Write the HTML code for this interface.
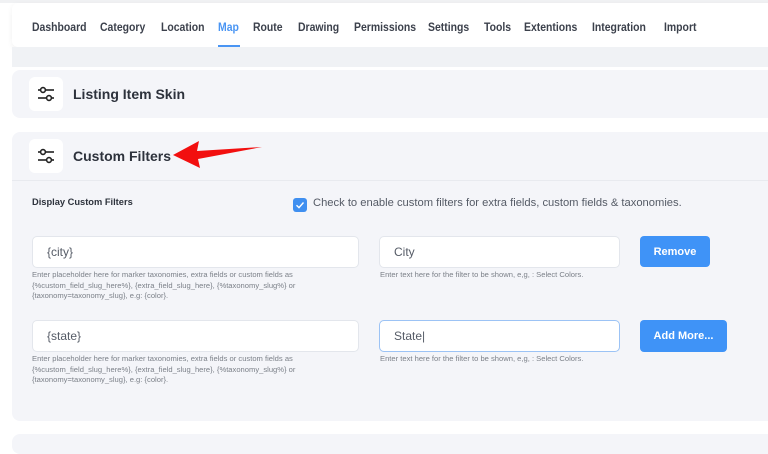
<!DOCTYPE html>
<html><head><meta charset="utf-8"><style>
*{box-sizing:border-box;margin:0;padding:0}
body{width:768px;height:437px;overflow:hidden;background:#fff;font-family:"Liberation Sans",sans-serif;position:relative}
.abs{position:absolute}
.nav{left:12px;top:3px;width:770px;height:44px;background:#fff;border-radius:6px;box-shadow:0 2px 6px rgba(0,0,0,.06)}
.nav span{position:absolute;top:17px;font-size:12px;font-weight:bold;color:#3c414c;white-space:nowrap;transform:scaleX(.87);transform-origin:left}
.band{left:12px;top:47px;width:760px;height:20px;background:#f0f2f5}
.card{background:#f4f5f9;border-radius:8px}
.ico{width:34px;height:34px;background:#fff;border-radius:6px}
.ttl{font-size:14px;font-weight:bold;color:#2d323c}
.inp{background:#fff;border:1px solid #e3e6ec;border-radius:5px;font-size:12px;color:#555b66;padding:0 0 0 14px;display:flex;align-items:center}
.help{font-size:7.6px;line-height:10.5px;color:#7c8189}
.btn{background:#3f93f7;color:#fff;font-size:11px;font-weight:bold;border-radius:4px;display:flex;align-items:center;justify-content:center}
</style></head><body>
<div class="abs" style="left:0;top:0;width:768px;height:3px;background:#f0f1f3"></div>
<div class="abs nav">
<span style="left:20px">Dashboard</span><span style="left:88px">Category</span><span style="left:149px">Location</span><span style="left:206px;color:#4a95f3">Map</span><span style="left:241px">Route</span><span style="left:286px">Drawing</span><span style="left:342px">Permissions</span><span style="left:416px">Settings</span><span style="left:472px">Tools</span><span style="left:512px">Extentions</span><span style="left:580px">Integration</span><span style="left:652px">Import</span>
<div class="abs" style="left:206px;top:42px;width:22px;height:2px;background:#4a95f3"></div>
</div>
<div class="abs band"></div>
<div class="abs card" style="left:12px;top:70px;width:770px;height:48px"></div>
<div class="abs ico" style="left:29px;top:77px"><svg width="34" height="34"><g stroke="#222" stroke-width="1.6" fill="#fff"><line x1="9" y1="13" x2="25" y2="13"/><line x1="9" y1="21" x2="25" y2="21"/><circle cx="14" cy="13" r="2.4"/><circle cx="20" cy="21" r="2.4"/></g></svg></div>
<div class="abs ttl" style="left:73px;top:86px">Listing Item Skin</div>
<div class="abs card" style="left:12px;top:132px;width:770px;height:289px"></div>
<div class="abs" style="left:12px;top:180px;width:760px;height:1px;background:#e8eaef"></div>
<div class="abs ico" style="left:29px;top:139px"><svg width="34" height="34"><g stroke="#222" stroke-width="1.6" fill="#fff"><line x1="9" y1="13" x2="25" y2="13"/><line x1="9" y1="21" x2="25" y2="21"/><circle cx="14" cy="13" r="2.4"/><circle cx="20" cy="21" r="2.4"/></g></svg></div>
<div class="abs ttl" style="left:73px;top:148px">Custom Filters</div>
<svg class="abs" style="left:170px;top:138px" width="95" height="32"><polygon points="3,17 29,3 27,13 92,9 28,21 30,30" fill="#f20f0f"/></svg>
<div class="abs" style="left:32px;top:197px;font-size:9.3px;font-weight:bold;color:#2d323c">Display Custom Filters</div>
<div class="abs" style="left:293px;top:198px;width:14px;height:14px;background:#3f8ff0;border-radius:3px"><svg width="14" height="14"><polyline points="3.5,7.2 6,9.6 10.5,4.5" stroke="#fff" stroke-width="1.4" fill="none"/></svg></div>
<div class="abs" style="left:313px;top:197px;font-size:11.2px;color:#555b66;white-space:nowrap">Check to enable custom filters for extra fields, custom fields &amp; taxonomies.</div>

<div class="abs inp" style="left:32px;top:236px;width:327px;height:32px">{city}</div>
<div class="abs help" style="left:32px;top:270px;width:320px">Enter placeholder here for marker taxonomies, extra fields or custom fields as {%custom_field_slug_here%}, {extra_field_slug_here}, {%taxonomy_slug%} or {taxonomy=taxonomy_slug}, e.g: {color}.</div>
<div class="abs inp" style="left:379px;top:236px;width:241px;height:32px">City</div>
<div class="abs help" style="left:380px;top:270px;white-space:nowrap">Enter text here for the filter to be shown, e,g, : Select Colors.</div>
<div class="abs btn" style="left:640px;top:236px;width:70px;height:31px">Remove</div>

<div class="abs inp" style="left:32px;top:320px;width:327px;height:32px">{state}</div>
<div class="abs help" style="left:32px;top:354px;width:320px">Enter placeholder here for marker taxonomies, extra fields or custom fields as {%custom_field_slug_here%}, {extra_field_slug_here}, {%taxonomy_slug%} or {taxonomy=taxonomy_slug}, e.g: {color}.</div>
<div class="abs inp" style="left:379px;top:320px;width:241px;height:32px;border-color:#9cc3f5">State|</div>
<div class="abs help" style="left:380px;top:354px;white-space:nowrap">Enter text here for the filter to be shown, e,g, : Select Colors.</div>
<div class="abs btn" style="left:640px;top:320px;width:87px;height:32px">Add More...</div>

<div class="abs card" style="left:12px;top:434px;width:770px;height:20px"></div>
</body></html>
